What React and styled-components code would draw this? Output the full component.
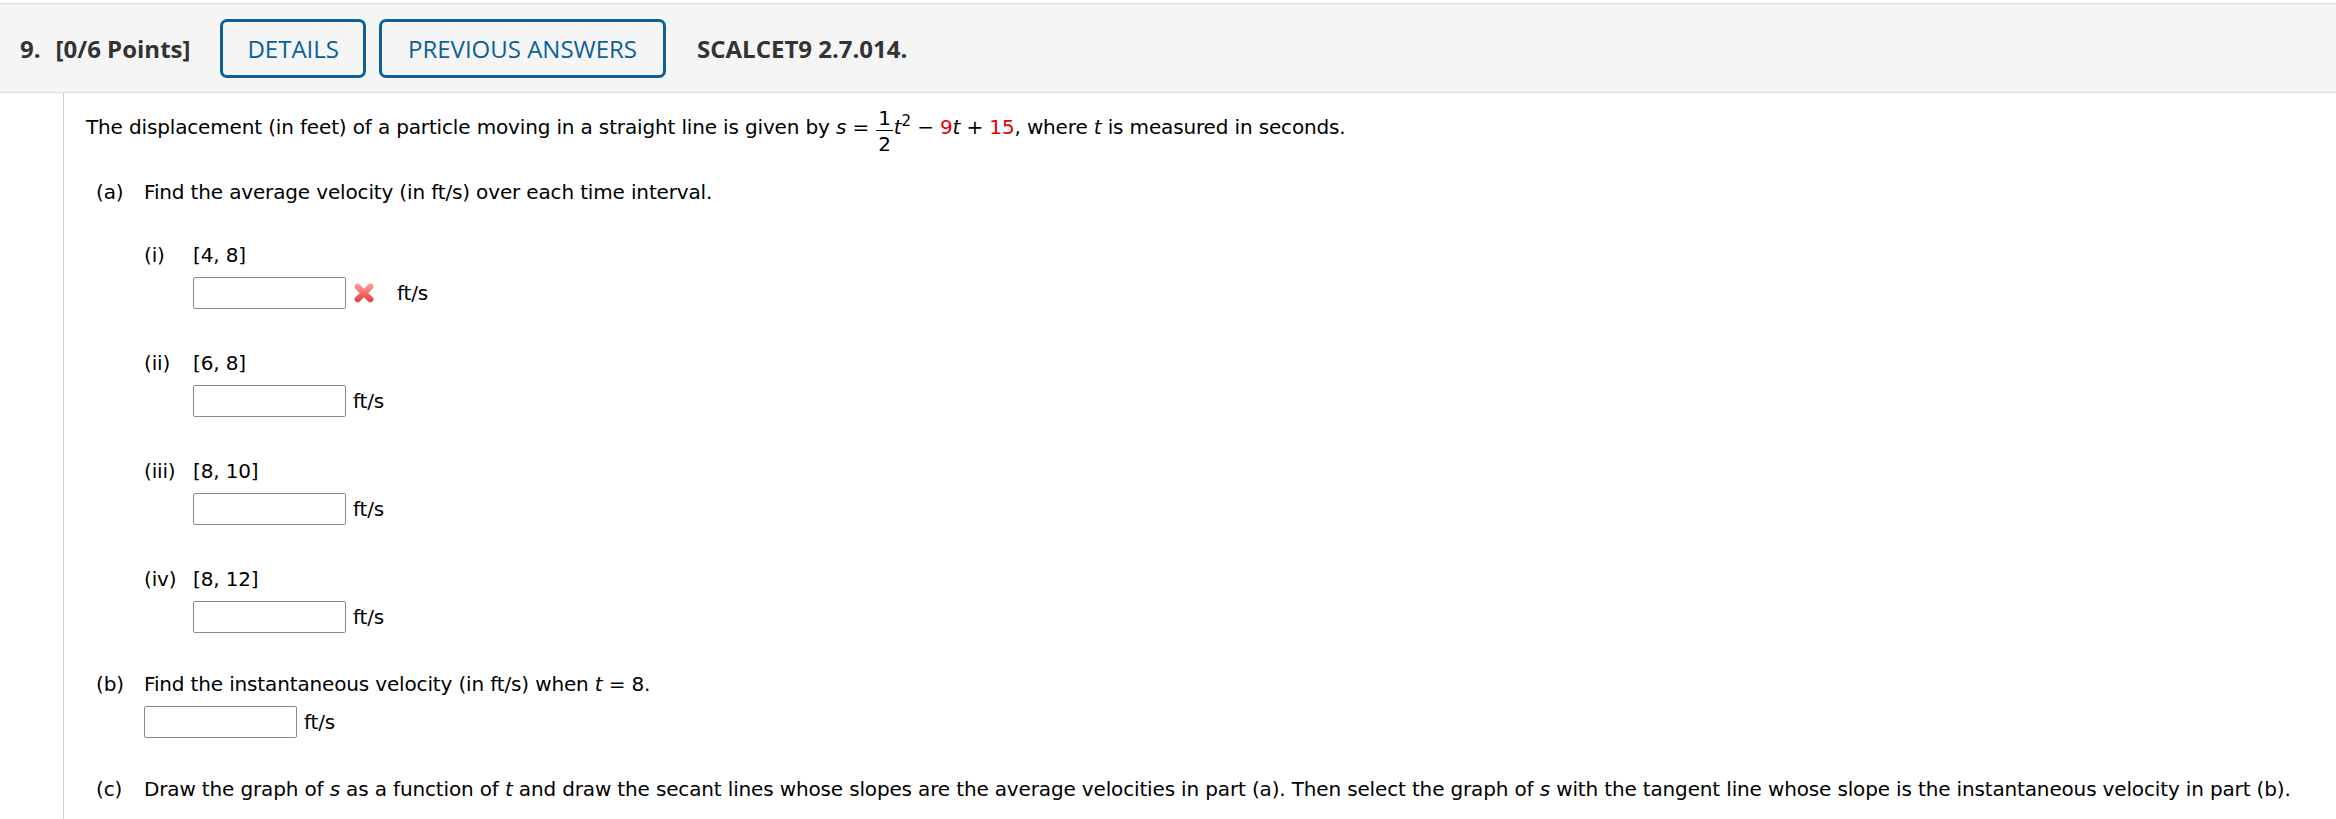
import React from 'react';
import styled, { createGlobalStyle } from 'styled-components';

const GlobalStyle = createGlobalStyle`
  html, body {
    margin: 0;
    padding: 0;
    background: #fff;
    overflow: hidden;
  }
  body {
    font-family: "DejaVu Sans", Verdana, sans-serif;
  }
`;

const Page = styled.div`
  padding-top: 3px;
  height: 816px;
  display: flex;
  flex-direction: column;
`;

// ---- header bar ----
const Header = styled.div`
  display: flex;
  align-items: center;
  height: 88px;
  padding-left: 20px;
  background: #f5f5f5;
  border-top: 1px solid #dcdcdc;
  border-bottom: 1px solid #dcdcdc;
  font-family: "Open Sans", sans-serif;
  font-size: 24px;
  color: #333;
`;

const Strong = styled.span`
  font-weight: 700;
  margin-left: ${(p) => p.$ml || 0}px;
  margin-right: ${(p) => p.$mr || 0}px;
`;

const HeadButton = styled.button`
  box-sizing: border-box;
  height: 59px;
  padding: 0 ${(p) => p.$px || 24}px;
  margin-right: ${(p) => p.$mr || 0}px;
  border: 3px solid #0a6199;
  border-radius: 7px;
  background: transparent;
  color: #0a6199;
  font-family: "Open Sans", sans-serif;
  font-size: 24px;
  font-weight: 400;
  cursor: pointer;
`;

// ---- question body ----
const Body = styled.div`
  flex: 1;
  margin-left: 63px;
  border-left: 1px solid #d0d0d0;
  padding: 15px 0 0 22px;
  font-size: 20px;
  letter-spacing: -0.15px;
  color: #000;
`;

const Question = styled.div`
  line-height: 24px;
  white-space: nowrap;
`;

const Frac = styled.span`
  display: inline-flex;
  flex-direction: column;
  align-items: center;
  vertical-align: 9px;
  line-height: 20px;
  margin: 0 1px;
`;

const Num = styled.span`
  padding: 0 2px 2px;
`;

const Den = styled.span`
  padding: 3px 2px 0;
  border-top: 1px solid #000;
`;

const Sup = styled.sup`
  font-size: 15px;
  line-height: 0;
`;

const Var = styled.i``;

const Red = styled.span`
  color: #e00000;
`;

const Parts = styled.div`
  display: flex;
  flex-direction: column;
  gap: 39px;
  margin: 26px 0 0 10px;
`;

const Part = styled.div`
  display: grid;
  grid-template-columns: 48px 1fr;
`;

const Label = styled.div`
  line-height: 24px;
`;

const PartBody = styled.div`
  display: flex;
  flex-direction: column;
  gap: ${(p) => p.$gap}px;
`;

const Line = styled.div`
  line-height: 24px;
  white-space: nowrap;
`;

const SubList = styled.div`
  display: flex;
  flex-direction: column;
  gap: 42px;
`;

const Sub = styled.div`
  display: grid;
  grid-template-columns: 49px 1fr;
`;

const SubBody = styled.div`
  display: flex;
  flex-direction: column;
  gap: 10px;
`;

const AnswerRow = styled.div`
  display: flex;
  align-items: center;
  height: 32px;
`;

const Input = styled.input`
  box-sizing: border-box;
  width: 153px;
  height: 32px;
  margin: 0;
  border: 1px solid #8a8a8a;
  border-radius: 2px;
  background: #fff;
`;

const Unit = styled.span`
  margin-left: ${(p) => (p.$afterMark ? 23 : 7)}px;
  line-height: 24px;
`;

const Mark = styled.svg`
  margin-left: 8px;
  flex: none;
`;

const WrongMark = () => (
  <Mark width="20" height="20" viewBox="0 0 20 20">
    <defs>
      <linearGradient id="xg" x1="0" y1="0" x2="0" y2="1">
        <stop offset="0" stopColor="#ff8f8f" />
        <stop offset="1" stopColor="#e84848" />
      </linearGradient>
    </defs>
    <path d="M3.6 3.6 L16.4 16.4 M16.4 3.6 L3.6 16.4" stroke="url(#xg)" strokeWidth="6" strokeLinecap="round" fill="none" />
  </Mark>
);

const Answer = ({ wrong }) => (
  <AnswerRow>
    <Input type="text" />
    {wrong && <WrongMark />}
    <Unit $afterMark={wrong}>ft/s</Unit>
  </AnswerRow>
);

const intervals = [
  { label: '(i)', range: '[4, 8]', wrong: true },
  { label: '(ii)', range: '[6, 8]' },
  { label: '(iii)', range: '[8, 10]' },
  { label: '(iv)', range: '[8, 12]' },
];

export default function App() {
  return (
    <>
      <GlobalStyle />
      <Page>
        <Header>
          <Strong $mr={15}>9.</Strong>
          <Strong $mr={30}>[0/6 Points]</Strong>
          <HeadButton $mr={13}>DETAILS</HeadButton>
          <HeadButton $mr={31} $px={26}>PREVIOUS ANSWERS</HeadButton>
          <Strong>SCALCET9 2.7.014.</Strong>
        </Header>

        <Body>
          <Question>
            The displacement (in feet) of a particle moving in a straight line is given by <Var>s</Var> ={' '}
            <Frac>
              <Num>1</Num>
              <Den>2</Den>
            </Frac>
            <Var>t</Var>
            <Sup>2</Sup> − <Red>9</Red>
            <Var>t</Var> + <Red>15</Red>, where <Var>t</Var> is measured in seconds.
          </Question>

          <Parts>
            <Part>
              <Label>(a)</Label>
              <PartBody $gap={39}>
                <Line>Find the average velocity (in ft/s) over each time interval.</Line>
                <SubList>
                  {intervals.map((it) => (
                    <Sub key={it.label}>
                      <Label>{it.label}</Label>
                      <SubBody>
                        <Line>{it.range}</Line>
                        <Answer wrong={it.wrong} />
                      </SubBody>
                    </Sub>
                  ))}
                </SubList>
              </PartBody>
            </Part>

            <Part>
              <Label>(b)</Label>
              <PartBody $gap={10}>
                <Line>
                  Find the instantaneous velocity (in ft/s) when <Var>t</Var> = 8.
                </Line>
                <Answer />
              </PartBody>
            </Part>

            <Part>
              <Label>(c)</Label>
              <PartBody $gap={0}>
                <Line>
                  Draw the graph of <Var>s</Var> as a function of <Var>t</Var> and draw the secant lines whose slopes
                  are the average velocities in part (a). Then select the graph of <Var>s</Var> with the tangent line
                  whose slope is the instantaneous velocity in part (b).
                </Line>
              </PartBody>
            </Part>
          </Parts>
        </Body>
      </Page>
    </>
  );
}
